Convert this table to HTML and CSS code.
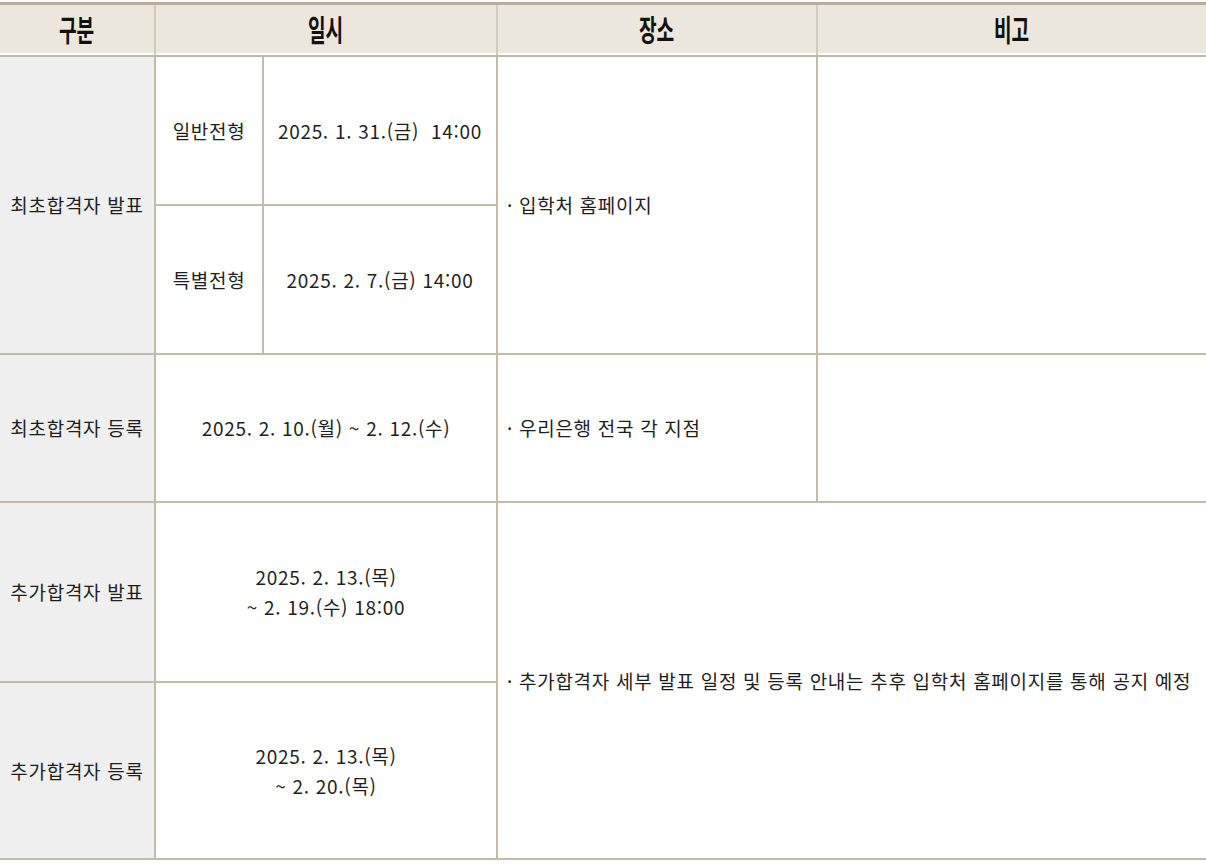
FILE: index.html
```html
<!DOCTYPE html>
<html lang="ko">
<head>
<meta charset="utf-8">
<title>합격자 발표 및 등록 일정</title>
<link rel="stylesheet" href="styles.css">
</head>
<body>
<table class="sched">
  <colgroup>
    <col class="c1"><col class="c2"><col class="c3"><col class="c4"><col class="c5">
  </colgroup>
  <thead>
    <tr>
      <th><span class="hd">구분</span></th>
      <th colspan="2"><span class="hd">일시</span></th>
      <th><span class="hd">장소</span></th>
      <th><span class="hd">비고</span></th>
    </tr>
  </thead>
  <tbody>
    <tr class="r1">
      <td class="cat" rowspan="2">최초합격자 발표</td>
      <td>일반전형</td>
      <td>2025. 1. 31.(금)&nbsp; 14:00</td>
      <td class="left" rowspan="2">· 입학처 홈페이지</td>
      <td rowspan="2"></td>
    </tr>
    <tr class="r2">
      <td>특별전형</td>
      <td>2025. 2. 7.(금) 14:00</td>
    </tr>
    <tr class="r3">
      <td class="cat">최초합격자 등록</td>
      <td colspan="2">2025. 2. 10.(월) ~ 2. 12.(수)</td>
      <td class="left">· 우리은행 전국 각 지점</td>
      <td></td>
    </tr>
    <tr class="r4">
      <td class="cat">추가합격자 발표</td>
      <td colspan="2">2025. 2. 13.(목)<br>~ 2. 19.(수) 18:00</td>
      <td class="left" colspan="2" rowspan="2">· 추가합격자 세부 발표 일정 및 등록 안내는 추후 입학처 홈페이지를 통해 공지 예정</td>
    </tr>
    <tr class="r5">
      <td class="cat">추가합격자 등록</td>
      <td colspan="2">2025. 2. 13.(목)<br>~ 2. 20.(목)</td>
    </tr>
  </tbody>
</table>
</body>
</html>
```

FILE: styles.css
```css
html, body {
  margin: 0;
  padding: 0;
  background: #ffffff;
}

body {
  padding-top: 2px;
  font-family: "Noto Sans CJK KR", "Noto Sans", sans-serif;
  color: #1e1e1e;
}

.sched {
  width: 1206px;
  border-collapse: collapse;
  table-layout: fixed;
  border-top: 3px solid #b9ae9b;
  border-bottom: 2px solid #c3b8a4;
}

.c1 { width: 155px; }
.c2 { width: 108px; }
.c3 { width: 234px; }
.c4 { width: 320px; }
.c5 { width: 389px; }

.sched th {
  height: 50px;
  padding: 0;
  background: #ebe7dc;
  box-shadow: inset 0 -2px 0 #ffffff;
  border-left: 2px solid #d2c9b8;
  border-bottom: 2px solid #c3b8a4;
  text-align: center;
  vertical-align: middle;
  font-weight: 700;
  color: #111111;
}

.sched th:first-child {
  border-left: 0;
}

.hd {
  display: inline-block;
  font-size: 30px;
  line-height: 32px;
  transform: scaleX(0.64);
  margin-bottom: 4px;
}

.sched td {
  padding: 0;
  border: 2px solid #c6bba8;
  text-align: center;
  vertical-align: middle;
  font-size: 19px;
  letter-spacing: 0.7px;
  line-height: 30px;
  color: #1e1e1e;
}

.sched td:first-child {
  border-left: 0;
}

.sched td:last-child {
  border-right: 0;
}

.sched td.cat {
  background: #efefef;
}

.sched td.left {
  text-align: left;
  padding-left: 9px;
}

.r1 { height: 149px; }
.r2 { height: 149px; }
.r3 { height: 148px; }
.r4 { height: 180px; }
.r5 { height: 177px; }
```
